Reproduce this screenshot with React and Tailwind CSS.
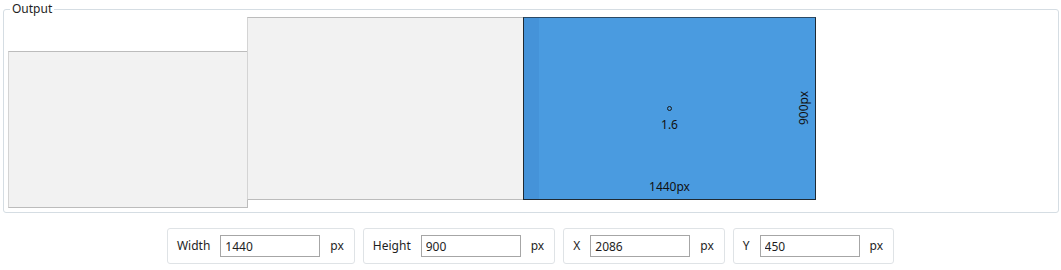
import React from 'react';

const monitors = [
  { id: 1, left: 4, top: 41, width: 240, height: 157 },
  { id: 2, left: 243, top: 7, width: 277, height: 183 },
];

const fields = [
  { label: 'Width', value: '1440' },
  { label: 'Height', value: '900' },
  { label: 'X', value: '2086' },
  { label: 'Y', value: '450' },
];

function Field({ label, value }) {
  return (
    <div className="flex items-center gap-2.5 h-[36px] pl-[9px] pr-[10px] border border-[#dfe3e6] rounded-[3px] bg-white">
      <span className="text-[12px] text-[#1e1e1e]">{label}</span>
      <input
        readOnly
        value={value}
        className="w-[100px] h-[22px] border border-[#a6a6a6] px-1 text-[12px] text-[#1e1e1e] outline-none bg-white"
      />
      <span className="text-[12px] text-[#1e1e1e]">px</span>
    </div>
  );
}

export default function App() {
  return (
    <div
      className="w-[1061px] h-[270px] bg-white overflow-hidden pt-[9px] pl-[3px]"
      style={{ fontFamily: '"Noto Sans", "Open Sans", sans-serif' }}
    >
      {/* Output group box */}
      <div className="relative w-[1056px] h-[204px] border border-[#d5dde3] rounded-[3px]">
        <span className="absolute -top-[8px] left-[6px] px-[2px] bg-white text-[12px] leading-[14px] text-[#1e1e1e]">
          Output
        </span>

        {/* monitor canvas: positions are the display arrangement */}
        {monitors.map((m) => (
          <div
            key={m.id}
            className="absolute bg-[#f2f2f2] border border-[#bcbcbc] border-l-[#d4d4d4]"
            style={{ left: m.left, top: m.top, width: m.width, height: m.height }}
          />
        ))}

        {/* Selected monitor */}
        <div className="absolute left-[519px] top-[7px] w-[293px] h-[183px] bg-[#4a9be0] border border-[#1f2a33] border-t-[#2b4a66]">
          <div className="absolute left-0 top-0 bottom-0 w-[15px] bg-[#4593d9]" />
          <div className="relative flex flex-col items-center pt-[88px] text-[12px] leading-[16px] text-[#111]">
            <div className="w-[5px] h-[5px] rounded-full border border-[#1a1a1a]" />
            <div className="mt-[6px]">1.6</div>
            <div className="mt-[46px]">1440px</div>
          </div>
          <div className="absolute right-[-9px] top-[82px] w-[40px] text-center text-[12px] leading-[16px] text-[#111] -rotate-90">
            900px
          </div>
        </div>
      </div>

      {/* Position / size fields */}
      <div className="flex justify-center gap-2 mt-[15px] -ml-[3px]">
        {fields.map((f) => (
          <Field key={f.label} label={f.label} value={f.value} />
        ))}
      </div>
    </div>
  );
}
